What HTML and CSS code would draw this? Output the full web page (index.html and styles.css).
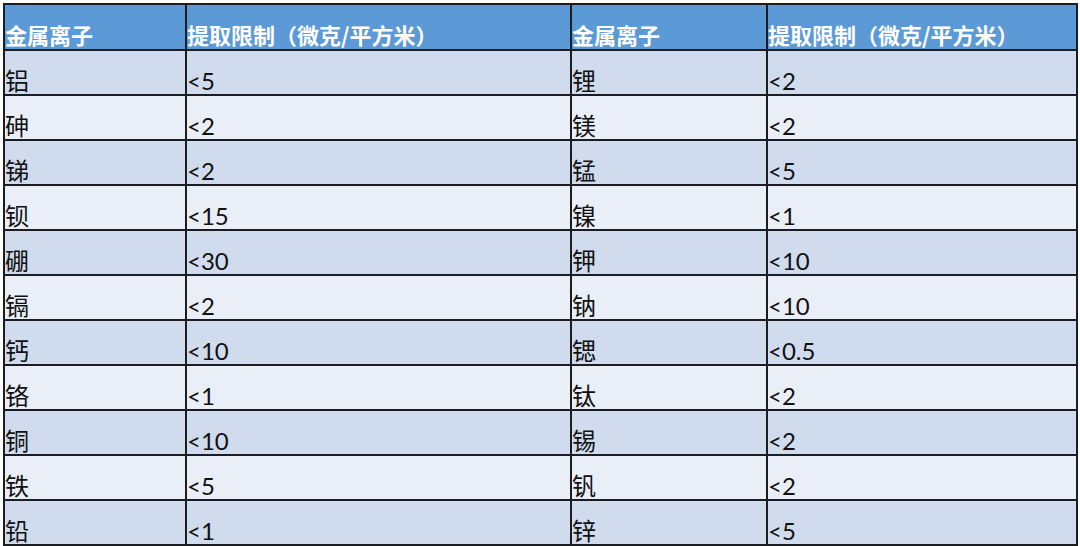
FILE: index.html
```html
<!DOCTYPE html>
<html lang="zh">
<head>
<meta charset="utf-8">
<title>金属离子提取限制</title>
<link rel="stylesheet" href="styles.css">
</head>
<body>
<table class="grid">
  <colgroup>
    <col class="c1"><col class="c2"><col class="c3"><col class="c4">
  </colgroup>
  <thead>
    <tr class="head">
      <th>金属离子</th><th>提取限制（微克/平方米）</th><th>金属离子</th><th>提取限制（微克/平方米）</th>
    </tr>
  </thead>
  <tbody>
    <tr class="odd"><td>铝</td><td>&lt;5</td><td>锂</td><td>&lt;2</td></tr>
    <tr class="even"><td>砷</td><td>&lt;2</td><td>镁</td><td>&lt;2</td></tr>
    <tr class="odd"><td>锑</td><td>&lt;2</td><td>锰</td><td>&lt;5</td></tr>
    <tr class="even"><td>钡</td><td>&lt;15</td><td>镍</td><td>&lt;1</td></tr>
    <tr class="odd"><td>硼</td><td>&lt;30</td><td>钾</td><td>&lt;10</td></tr>
    <tr class="even"><td>镉</td><td>&lt;2</td><td>钠</td><td>&lt;10</td></tr>
    <tr class="odd"><td>钙</td><td>&lt;10</td><td>锶</td><td>&lt;0.5</td></tr>
    <tr class="even"><td>铬</td><td>&lt;1</td><td>钛</td><td>&lt;2</td></tr>
    <tr class="odd"><td>铜</td><td>&lt;10</td><td>锡</td><td>&lt;2</td></tr>
    <tr class="even"><td>铁</td><td>&lt;5</td><td>钒</td><td>&lt;2</td></tr>
    <tr class="odd"><td>铅</td><td>&lt;1</td><td>锌</td><td>&lt;5</td></tr>
  </tbody>
</table>
</body>
</html>
```
FILE: styles.css
```css
html, body {
  margin: 0;
  padding: 0;
  background: #ffffff;
}
body {
  padding: 3px 0 0 3px;
}
.grid {
  border-collapse: collapse;
  table-layout: fixed;
  width: 1073px;
  font-family: Lato, "Noto Sans CJK SC", sans-serif;
  color: #111111;
}
.c1 { width: 182px; }
.c2 { width: 385px; }
.c3 { width: 196px; }
.c4 { width: 310px; }
.grid th, .grid td {
  border: 2px solid #1b1d22;
  padding: 0;
  text-align: left;
  vertical-align: bottom;
  white-space: nowrap;
}
.head th {
  height: 44px;
  background: #5b9ad6;
  color: #ffffff;
  font-weight: 700;
  font-size: 22px;
  line-height: 30px;
  font-family: "Noto Sans CJK SC", sans-serif;
}
.grid td {
  height: 43px;
  font-size: 24px;
  line-height: 26px;
}
.odd td { background: #d0dcee; }
.even td { background: #e9eef7; }
```
